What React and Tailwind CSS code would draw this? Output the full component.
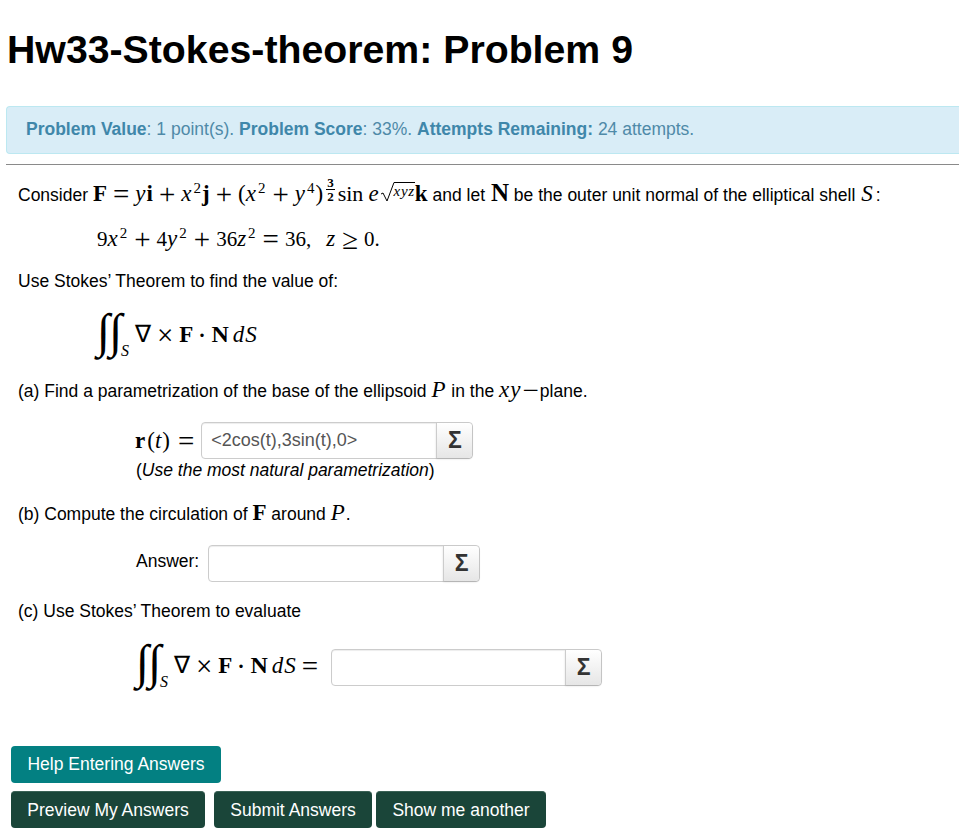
import React from 'react';

const serif = "font-['Liberation_Serif',serif]";

const V = ({ children, className = '' }) => <i className={`${serif} text-[23px] leading-none tracking-[1px] ${className}`}>{children}</i>;
const B = ({ children, className = '' }) => <b className={`${serif} text-[23px] leading-none ${className}`}>{children}</b>;
const R = ({ children, className = '' }) => <span className={`${serif} text-[21px] leading-none ${className}`}>{children}</span>;
const Sup = ({ children }) => <span className={`${serif} text-[15px] leading-none relative -top-[8px] mx-[1px]`}>{children}</span>;
const Op = ({ children, className = 'mx-[6px]' }) => <span className={`${serif} text-[29px] leading-none relative top-[3px] ${className}`}>{children}</span>;

const Integral = () => (
  <span className={`${serif} inline-block h-[50px] w-[38px] relative shrink-0`}>
    <span className="absolute left-0 top-[-2px] italic text-[48px] leading-[52px] tracking-[-1px] whitespace-nowrap">∫∫</span>
    <i className="absolute left-[24px] bottom-[-2px] text-[16px] leading-none">S</i>
  </span>
);

const CurlExpr = () => (
  <span className="inline-flex items-baseline whitespace-nowrap">
    <R className="text-[24px]">∇</R><Op className="mx-[6px]">×</Op><B className="mr-[5px]">F</B><R className="mr-[6px] font-bold">·</R><B className="mr-[4px] text-[24px]">N</B><V>dS</V>
  </span>
);

const AnswerInput = ({ width, value }) => (
  <span className="inline-flex h-[37px] rounded-[4px] border border-[#cccccc] bg-white shadow-[inset_0_1px_1px_rgba(0,0,0,0.075)]" style={{ width }}>
    <span className="flex-1 px-[9px] leading-[35px] text-[18px] text-[#555555] whitespace-nowrap overflow-hidden">{value}</span>
    <span className="w-[36px] flex items-center justify-center border-l border-[#cccccc] rounded-r-[4px] bg-gradient-to-b from-white to-[#e6e6e6] shadow-[0_1px_2px_rgba(0,0,0,0.15)]">
      <span className="text-[23px] leading-none font-bold text-[#333333]">Σ</span>
    </span>
  </span>
);

const DarkButton = ({ children, width, className = '' }) => (
  <button className={`h-[37px] rounded-[4px] bg-[#1a4539] border-t border-[#3a6155] text-white text-[17.5px] ${className}`} style={{ width }}>
    {children}
  </button>
);

export default function App() {
  return (
    <div className="min-h-[838px] bg-white text-black font-['Liberation_Sans',Arial,sans-serif] text-[17.5px] overflow-hidden pl-[6px]">
      <h1 className="pl-[1px] pt-[28px] h-[106px] text-[39.25px] leading-[42px] font-bold whitespace-nowrap">Hw33-Stokes-theorem: Problem 9</h1>

      <div className="h-[48px] pl-[19px] rounded-l-[4px] border border-r-0 border-[#bce8f1] bg-[#d9edf7] text-[#4f8aa8] leading-[44px] whitespace-nowrap">
        <b className="text-[#3f87aa]">Problem Value</b>: 1 point(s). <b className="text-[#3f87aa]">Problem Score</b>: 33%. <b className="text-[#3f87aa]">Attempts Remaining:</b> 24 attempts.
      </div>

      <hr className="mt-[10px] border-t border-[#8a8a8a]" />

      <div className="pl-[12px]">
        <p className="h-[44px] mt-[12px] leading-[28px] whitespace-nowrap">
          Consider <B>F</B><Op>=</Op><V>y</V><B>i</B><Op>+</Op><V>x</V><Sup>2</Sup><B>j</B><Op>+</Op><R className="text-[23px]">(</R><V>x</V><Sup>2</Sup><Op>+</Op><V>y</V><Sup>4</Sup><R className="text-[23px]">)</R>
          <span className={`${serif} inline-flex flex-col items-center align-middle relative -top-[4px] text-[13px] leading-[13px] font-semibold ml-[3px] mr-[3px] -mt-[6px]`}><span className="border-b border-black px-[1px]">3</span><span>2</span></span>
          <R className="text-[22px] mr-[5px]">sin</R><V>e</V>
          <span className="inline-flex items-start relative -top-[5px] h-[18px] align-middle">
            <svg width="15" height="20" viewBox="0 0 15 20" fill="none" stroke="black" strokeWidth="1" className="shrink-0">
              <path d="M1 12 L3 11 L7 19 L14 0.5" />
            </svg>
            <i className={`${serif} text-[15px] leading-[17px] tracking-[0.7px] border-t border-black -ml-[1px]`}>xyz</i>
          </span>
          <B>k</B> and let <B className="text-[25px] ml-[1px]">N</B> be the outer unit normal of the elliptical shell <V className="ml-[1px] mr-[2px]">S</V>:
        </p>

        <p className="h-[48px] pl-[79px] leading-[38px] whitespace-nowrap">
          <R>9</R><V>x</V><Sup>2</Sup><Op>+</Op><R>4</R><V>y</V><Sup>2</Sup><Op>+</Op><R>36</R><V>z</V><Sup>2</Sup><Op>=</Op><R>36,</R><V className="ml-[15px]">z</V><Op>≥</Op><R>0.</R>
        </p>

        <p className="h-[24px] leading-[24px]">Use Stokes’ Theorem to find the value of:</p>

        <div className="h-[78px] mb-[2px] pl-[79px] flex items-center">
          <Integral /><CurlExpr />
        </div>

        <p className="h-[43px] leading-[28px] whitespace-nowrap">
          (a) Find a parametrization of the base of the ellipsoid <V>P</V> in the <V>xy</V><Op className="mx-[1px]">−</Op>plane.
        </p>

        <div className="h-[48px] pl-[117px] flex items-center gap-[7px]">
          <span className="whitespace-nowrap"><B>r</B><R className="text-[23px] ml-[2px]">(</R><V>t</V><R className="text-[23px]">)</R><Op className="ml-[8px]">=</Op></span>
          <AnswerInput width={272} value="<2cos(t),3sin(t),0>" />
        </div>

        <p className="h-[38px] -mt-[4px] pl-[118px] leading-[20px]">(<i>Use the most natural parametrization</i>)</p>

        <p className="h-[42px] leading-[32px] whitespace-nowrap">
          (b) Compute the circulation of <B>F</B> around <V>P</V>.
        </p>

        <div className="h-[47px] pl-[118px] flex items-center gap-[9px]">
          <span className="-mt-[5px]">Answer:</span>
          <AnswerInput width={272} />
        </div>

        <p className="h-[50px] leading-[48px]">(c) Use Stokes’ Theorem to evaluate</p>

        <div className="h-[60px] pl-[118px] flex items-center">
          <span className="inline-flex items-center -mt-[8px]">
            <Integral /><CurlExpr /><Op className="ml-[5px] mr-[13px]">=</Op>
          </span>
          <AnswerInput width={271} />
        </div>
      </div>

      <div className="pl-[5px] mt-[49px] flex flex-col gap-[8px] items-start">
        <button className="h-[37px] w-[210px] rounded-[4px] bg-[#038082] text-white text-[17.5px]">Help Entering Answers</button>
        <div className="flex">
          <DarkButton width={194} className="mr-[9px]">Preview My Answers</DarkButton>
          <DarkButton width={158} className="mr-[4px]">Submit Answers</DarkButton>
          <DarkButton width={170}>Show me another</DarkButton>
        </div>
      </div>
    </div>
  );
}
